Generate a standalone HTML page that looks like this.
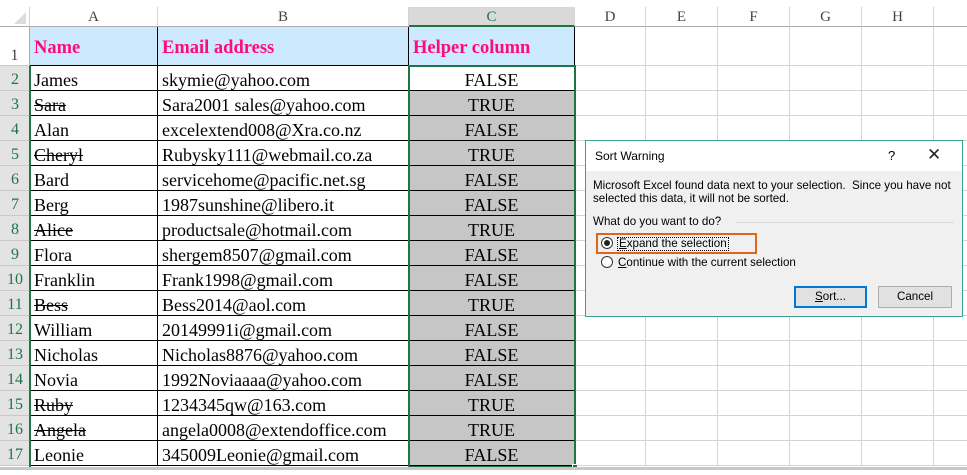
<!DOCTYPE html>
<html><head><style>
body{margin:0;width:967px;height:475px;background:#fff;position:relative;overflow:hidden;font-family:"Liberation Serif",serif;}
div{position:absolute;box-sizing:border-box;}
.ch{top:7px;height:20px;text-align:center;font-size:15px;color:#444;line-height:21px;border-right:1px solid #d4d4d4;border-bottom:1px solid #ababab;background:#fff}
.rh{left:0;width:30px;text-align:center;font-size:16px;color:#217346;background:#e3e3e3;border-bottom:1px solid #c8c8c8;line-height:28px}
.c{font-size:18px;line-height:28px;white-space:nowrap;padding-left:4px;color:#000;border-right:1px solid #000;border-bottom:1px solid #000;height:25px;overflow:hidden}
.g{border-right:1px solid #d4d4d4;border-bottom:1px solid #d4d4d4;height:25px}
.s{text-decoration:line-through}
.dlg{font-family:"Liberation Sans",sans-serif;}
</style></head><body>
<div style="left:0;top:7px;width:30px;height:20px;background:#fff;border-right:1px solid #d4d4d4;border-bottom:1px solid #ababab"></div>
<div style="left:14px;top:12px;width:0;height:0;border-left:12px solid transparent;border-bottom:12px solid #dcdcdc"></div>
<div class="ch" style="left:30px;width:128px">A</div>
<div class="ch" style="left:158px;width:251px">B</div>
<div class="ch" style="left:409px;width:166px;background:#d9d9d9;border-bottom:2px solid #217346;color:#217346">C</div>
<div class="ch" style="left:575px;width:71px">D</div>
<div class="ch" style="left:646px;width:72px">E</div>
<div class="ch" style="left:718px;width:72px">F</div>
<div class="ch" style="left:790px;width:72px">G</div>
<div class="ch" style="left:862px;width:72px">H</div>
<div class="ch" style="left:934px;width:40px"></div>
<div class="rh" style="top:27px;height:39px;background:#fff;color:#444;line-height:58px;border-right:1px solid #ababab">1</div>
<div class="c" style="left:30px;top:27px;width:128px;height:39px;background:#cdeafd;color:#ff0a7b;font-weight:bold;line-height:42px;font-size:18.5px">Name</div>
<div class="c" style="left:158px;top:27px;width:251px;height:39px;background:#cdeafd;color:#ff0a7b;font-weight:bold;line-height:42px;font-size:18.5px">Email address</div>
<div class="c" style="left:409px;top:27px;width:166px;height:39px;background:#cdeafd;color:#ff0a7b;font-weight:bold;line-height:42px;font-size:18.5px">Helper column</div>
<div class="g" style="left:575px;top:27px;width:71px;height:39px"></div>
<div class="g" style="left:646px;top:27px;width:72px;height:39px"></div>
<div class="g" style="left:718px;top:27px;width:72px;height:39px"></div>
<div class="g" style="left:790px;top:27px;width:72px;height:39px"></div>
<div class="g" style="left:862px;top:27px;width:72px;height:39px"></div>
<div class="g" style="left:934px;top:27px;width:40px;height:39px"></div>
<div id="rows"></div>
<script>
var d=[["James","skymie@yahoo.com","FALSE",0],["Sara","Sara2001 sales@yahoo.com","TRUE",1],["Alan","excelextend008@Xra.co.nz","FALSE",0],["Cheryl","Rubysky111@webmail.co.za","TRUE",1],["Bard","servicehome@pacific.net.sg","FALSE",0],["Berg","1987sunshine@libero.it","FALSE",0],["Alice","productsale@hotmail.com","TRUE",1],["Flora","shergem8507@gmail.com","FALSE",0],["Franklin","Frank1998@gmail.com","FALSE",0],["Bess","Bess2014@aol.com","TRUE",1],["William","20149991i@gmail.com","FALSE",0],["Nicholas","Nicholas8876@yahoo.com","FALSE",0],["Novia","1992Noviaaaa@yahoo.com","FALSE",0],["Ruby","1234345qw@163.com","TRUE",1],["Angela","angela0008@extendoffice.com","TRUE",1],["Leonie","345009Leonie@gmail.com","FALSE",0]];
var h="";
d.forEach(function(r,i){var t=66+i*25;
h+='<div class="rh" style="top:'+t+'px;height:25px">'+(i+2)+'</div>';
h+='<div class="c'+(r[3]?' s':'')+'" style="left:30px;top:'+t+'px;width:128px">'+r[0]+'</div>';
h+='<div class="c" style="left:158px;top:'+t+'px;width:251px">'+r[1]+'</div>';
h+='<div class="c" style="left:409px;top:'+t+'px;width:166px;text-align:center;padding:0;background:'+(i==0?'#fff':'#c6c6c6')+'">'+r[2]+'</div>';
[[575,71],[646,72],[718,72],[790,72],[862,72],[934,40]].forEach(function(c){h+='<div class="g" style="left:'+c[0]+'px;top:'+t+'px;width:'+c[1]+'px"></div>';});
});
document.getElementById('rows').outerHTML=h;
</script>
<div style="left:29px;top:66px;width:2px;height:401px;background:#217346"></div>
<div style="left:408px;top:65px;width:168px;height:403px;border:2px solid #217346"></div>
<div style="left:572px;top:464px;width:6px;height:6px;background:#217346;border:1px solid #fff"></div>
<div style="left:0;top:467px;width:967px;height:3px;background:#c8c8c8"></div>
<div style="left:0;top:470px;width:967px;height:5px;background:#fff"></div>
<div class="dlg" style="left:585px;top:140px;width:378px;height:177px;border:1px solid #3aa092;background:#f0f0f0">
 <div style="left:0;top:0;width:376px;height:30px;background:#fff"></div>
 <div style="left:9px;top:8px;font-size:12px;color:#000">Sort Warning</div>
 <div style="left:302px;top:7px;font-size:13px">?</div>
 <div style="left:341px;top:4px;font-size:17px;font-family:'DejaVu Sans',sans-serif;font-weight:200;color:#222">✕</div>
 <div style="left:7px;top:38px;font-size:11.6px;line-height:13px;width:372px">Microsoft Excel found data next to your selection.&nbsp; Since you have not selected this data, it will not be sorted.</div>
 <div style="left:7px;top:74px;font-size:11.6px">What do you want to do?</div>
 <div style="left:150px;top:81px;width:218px;height:1px;background:#dcdcdc"></div>
 <div style="left:10px;top:92px;width:161px;height:21px;border:2px solid #e0641a"></div>
 <div style="left:15px;top:96px;width:12px;height:12px;border:1px solid #333;border-radius:50%;background:#fff"></div>
 <div style="left:18px;top:99px;width:6px;height:6px;border-radius:50%;background:#222"></div>
 <div style="left:31px;top:96px;font-size:11.6px;border:1px dotted #000;line-height:12px;padding:0 1px"><u>E</u>xpand the selection</div>
 <div style="left:15px;top:115px;width:12px;height:12px;border:1px solid #333;border-radius:50%;background:#fff"></div>
 <div style="left:32px;top:115px;font-size:11.6px"><u>C</u>ontinue with the current selection</div>
 <div style="left:208px;top:145px;width:73px;height:22px;border:2px solid #0078d7;background:#e1e1e1;font-size:11.6px;text-align:center;line-height:18px"><u>S</u>ort...</div>
 <div style="left:292px;top:145px;width:74px;height:22px;border:1px solid #adadad;background:#e1e1e1;font-size:11.6px;text-align:center;line-height:20px">Cancel</div>
</div>
</body></html>
